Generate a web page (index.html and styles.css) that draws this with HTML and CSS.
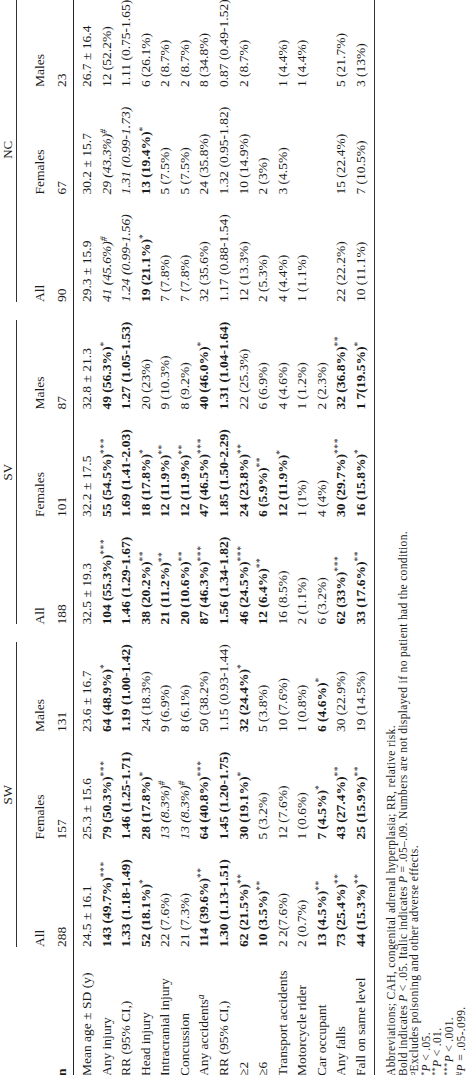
FILE: index.html
```html
<!DOCTYPE html>
<html lang="en">
<head>
<meta charset="utf-8">
<title>Injuries in CAH</title>
<link rel="stylesheet" href="styles.css">
</head>
<body>
<div class="page">
  <div class="row groups">
    <div class="c"></div>
    <div class="grp">SW</div>
    <div class="grp">SV</div>
    <div class="grp">NC</div>
  </div>
  <div class="row heads">
    <div class="c"></div>
    <div class="c">All</div><div class="c">Females</div><div class="c">Males</div>
    <div class="c">All</div><div class="c">Females</div><div class="c">Males</div>
    <div class="c">All</div><div class="c">Females</div><div class="c">Males</div>
  </div>
  <div class="row nrow">
    <div class="c b">n</div>
    <div class="c">288</div><div class="c">157</div><div class="c">131</div>
    <div class="c">188</div><div class="c">101</div><div class="c">87</div>
    <div class="c">90</div><div class="c">67</div><div class="c">23</div>
  </div>
  <div class="tbody">
    <div class="row">
      <div class="c">Mean age ± SD (y)</div>
      <div class="c">24.5 ± 16.1</div><div class="c">25.3 ± 15.6</div><div class="c">23.6 ± 16.7</div>
      <div class="c">32.5 ± 19.3</div><div class="c">32.2 ± 17.5</div><div class="c">32.8 ± 21.3</div>
      <div class="c">29.3 ± 15.9</div><div class="c">30.2 ± 15.7</div><div class="c">26.7 ± 16.4</div>
    </div>
    <div class="row">
      <div class="c">Any injury</div>
      <div class="c b">143 (49.7%)<span class="s">***</span></div><div class="c b">79 (50.3%)<span class="s">***</span></div><div class="c b">64 (48.9%)<span class="s">*</span></div>
      <div class="c b">104 (55.3%)<span class="s">***</span></div><div class="c b">55 (54.5%)<span class="s">***</span></div><div class="c b">49 (56.3%)<span class="s">*</span></div>
      <div class="c i">41 (45.6%)<span class="s">#</span></div><div class="c i">29 (43.3%)<span class="s">#</span></div><div class="c">12 (52.2%)</div>
    </div>
    <div class="row">
      <div class="c">RR (95% CI,)</div>
      <div class="c b">1.33 (1.18-1.49)</div><div class="c b">1.46 (1.25-1.71)</div><div class="c b">1.19 (1.00-1.42)</div>
      <div class="c b">1.46 (1.29-1.67)</div><div class="c b">1.69 (1.41-2.03)</div><div class="c b">1.27 (1.05-1.53)</div>
      <div class="c i">1.24 (0.99-1.56)</div><div class="c i">1.31 (0.99-1.73)</div><div class="c">1.11 (0.75-1.65)</div>
    </div>
    <div class="row">
      <div class="c">Head injury</div>
      <div class="c b">52 (18.1%)<span class="s">*</span></div><div class="c b">28 (17.8%)<span class="s">*</span></div><div class="c">24 (18.3%)</div>
      <div class="c b">38 (20.2%)<span class="s">**</span></div><div class="c b">18 (17.8%)<span class="s">*</span></div><div class="c">20 (23%)</div>
      <div class="c b">19 (21.1%)<span class="s">*</span></div><div class="c b">13 (19.4%)<span class="s">*</span></div><div class="c">6 (26.1%)</div>
    </div>
    <div class="row">
      <div class="c">Intracranial injury</div>
      <div class="c">22 (7.6%)</div><div class="c i">13 (8.3%)<span class="s">#</span></div><div class="c">9 (6.9%)</div>
      <div class="c b">21 (11.2%)<span class="s">**</span></div><div class="c b">12 (11.9%)<span class="s">**</span></div><div class="c">9 (10.3%)</div>
      <div class="c">7 (7.8%)</div><div class="c">5 (7.5%)</div><div class="c">2 (8.7%)</div>
    </div>
    <div class="row">
      <div class="c">Concussion</div>
      <div class="c">21 (7.3%)</div><div class="c i">13 (8.3%)<span class="s">#</span></div><div class="c">8 (6.1%)</div>
      <div class="c b">20 (10.6%)<span class="s">**</span></div><div class="c b">12 (11.9%)<span class="s">**</span></div><div class="c">8 (9.2%)</div>
      <div class="c">7 (7.8%)</div><div class="c">5 (7.5%)</div><div class="c">2 (8.7%)</div>
    </div>
    <div class="row">
      <div class="c">Any accidents<span class="s i">a</span></div>
      <div class="c b">114 (39.6%)<span class="s">**</span></div><div class="c b">64 (40.8%)<span class="s">***</span></div><div class="c">50 (38.2%)</div>
      <div class="c b">87 (46.3%)<span class="s">***</span></div><div class="c b">47 (46.5%)<span class="s">***</span></div><div class="c b">40 (46.0%)<span class="s">*</span></div>
      <div class="c">32 (35.6%)</div><div class="c">24 (35.8%)</div><div class="c">8 (34.8%)</div>
    </div>
    <div class="row">
      <div class="c">RR (95% CI,)</div>
      <div class="c b">1.30 (1.13-1.51)</div><div class="c b">1.45 (1.20-1.75)</div><div class="c">1.15 (0.93-1.44)</div>
      <div class="c b">1.56 (1.34-1.82)</div><div class="c b">1.85 (1.50-2.29)</div><div class="c b">1.31 (1.04-1.64)</div>
      <div class="c">1.17 (0.88-1.54)</div><div class="c">1.32 (0.95-1.82)</div><div class="c">0.87 (0.49-1.52)</div>
    </div>
    <div class="row">
      <div class="c">≥2</div>
      <div class="c b">62 (21.5%)<span class="s">**</span></div><div class="c b">30 (19.1%)<span class="s">*</span></div><div class="c b">32 (24.4%)<span class="s">*</span></div>
      <div class="c b">46 (24.5%)<span class="s">***</span></div><div class="c b">24 (23.8%)<span class="s">**</span></div><div class="c">22 (25.3%)</div>
      <div class="c">12 (13.3%)</div><div class="c">10 (14.9%)</div><div class="c">2 (8.7%)</div>
    </div>
    <div class="row">
      <div class="c">≥6</div>
      <div class="c b">10 (3.5%)<span class="s">**</span></div><div class="c">5 (3.2%)</div><div class="c">5 (3.8%)</div>
      <div class="c b">12 (6.4%)<span class="s">**</span></div><div class="c b">6 (5.9%)<span class="s">**</span></div><div class="c">6 (6.9%)</div>
      <div class="c">2 (5.3%)</div><div class="c">2 (3%)</div><div class="c"></div>
    </div>
    <div class="row">
      <div class="c">Transport accidents</div>
      <div class="c">2 2(7.6%)</div><div class="c">12 (7.6%)</div><div class="c">10 (7.6%)</div>
      <div class="c">16 (8.5%)</div><div class="c b">12 (11.9%)<span class="s">*</span></div><div class="c">4 (4.6%)</div>
      <div class="c">4 (4.4%)</div><div class="c">3 (4.5%)</div><div class="c">1 (4.4%)</div>
    </div>
    <div class="row">
      <div class="c">Motorcycle rider</div>
      <div class="c">2 (0.7%)</div><div class="c">1 (0.6%)</div><div class="c">1 (0.8%)</div>
      <div class="c">2 (1.1%)</div><div class="c">1 (1%)</div><div class="c">1 (1.2%)</div>
      <div class="c">1 (1.1%)</div><div class="c"></div><div class="c">1 (4.4%)</div>
    </div>
    <div class="row">
      <div class="c">Car occupant</div>
      <div class="c b">13 (4.5%)<span class="s">**</span></div><div class="c b">7 (4.5%)<span class="s">*</span></div><div class="c b">6 (4.6%)<span class="s">*</span></div>
      <div class="c">6 (3.2%)</div><div class="c">4 (4%)</div><div class="c">2 (2.3%)</div>
      <div class="c"></div><div class="c"></div><div class="c"></div>
    </div>
    <div class="row">
      <div class="c">Any falls</div>
      <div class="c b">73 (25.4%)<span class="s">**</span></div><div class="c b">43 (27.4%)<span class="s">**</span></div><div class="c">30 (22.9%)</div>
      <div class="c b">62 (33%)<span class="s">***</span></div><div class="c b">30 (29.7%)<span class="s">***</span></div><div class="c b">32 (36.8%)<span class="s">**</span></div>
      <div class="c">22 (22.2%)</div><div class="c">15 (22.4%)</div><div class="c">5 (21.7%)</div>
    </div>
    <div class="row">
      <div class="c">Fall on same level</div>
      <div class="c b">44 (15.3%)<span class="s">**</span></div><div class="c b">25 (15.9%)<span class="s">**</span></div><div class="c">19 (14.5%)</div>
      <div class="c b">33 (17.6%)<span class="s">**</span></div><div class="c b">16 (15.8%)<span class="s">*</span></div><div class="c b">1 7(19.5%)<span class="s">*</span></div>
      <div class="c">10 (11.1%)</div><div class="c">7 (10.5%)</div><div class="c">3 (13%)</div>
    </div>
  </div>
  <div class="notes">
    <p>Abbreviations; CAH, congenital adrenal hyperplasia; RR, relative risk.</p>
    <p>Bold indicates <i>P</i> &lt; .05. Italic indicates <i>P</i> = .05–.09. Numbers are not displayed if no patient had the condition.</p>
    <p><span class="s i">a</span>Excludes poisoning and other adverse effects.</p>
    <p><span class="s">*</span><i>P</i> &lt; .05.</p>
    <p><span class="s">**</span><i>P</i> &lt; .01.</p>
    <p><span class="s">***</span><i>P</i> &lt; .001.</p>
    <p><span class="s">#</span><i>P</i> = .05-.099.</p>
  </div>
</div>
</body>
</html>
```

FILE: styles.css
```css
html {
  overflow: hidden;
  background: #ffffff;
}

body {
  margin: 0;
  padding: 0;
  width: 474px;
  height: 1075px;
}

.page {
  width: 1100px;
  height: 474px;
  transform-origin: 0 0;
  transform: translateY(1076px) rotate(-90deg);
  font-family: "Liberation Serif", "Times New Roman", serif;
  font-size: 13.5px;
  color: #1c1c1c;
}

.row {
  display: grid;
  grid-template-columns: 129px repeat(9, 107.5px);
  white-space: nowrap;
}

.b { font-weight: bold; }
.i { font-style: italic; }

.s {
  font-size: 9.5px;
  line-height: 0;
  vertical-align: 4px;
  letter-spacing: 0.6px;
  font-weight: normal;
}

.groups {
  height: 18px;
}

.grp {
  grid-column: span 3;
  margin-right: 18px;
  height: 16px;
  border-bottom: 1px solid #333;
  text-align: center;
  font-size: 13px;
  line-height: 16px;
}

.heads .c {
  padding-top: 13px;
  padding-bottom: 2px;
  line-height: 18px;
}

.nrow {
  line-height: 22px;
  border-bottom: 1.5px solid #222;
}

.tbody {
  padding: 3px 0 4px;
  border-bottom: 1px solid #333;
}

.tbody .row {
  height: 19.57px;
  line-height: 19.57px;
}

.notes {
  padding-top: 10.5px;
  font-size: 11.5px;
  line-height: 11.6px;
  letter-spacing: 0.35px;
}

.notes p {
  margin: 0;
  white-space: nowrap;
}

.notes .s {
  font-size: 8.5px;
  vertical-align: 3px;
  letter-spacing: 0.3px;
}
```
